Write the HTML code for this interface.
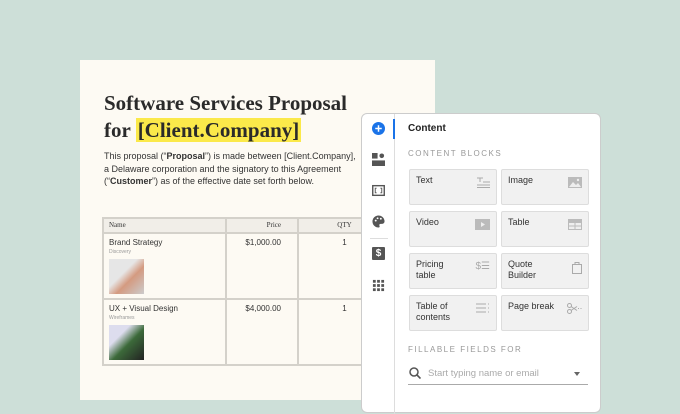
<!DOCTYPE html>
<html><head><style>
*{margin:0;padding:0;box-sizing:border-box}
body{width:680px;height:400px;background:#cddfd8;position:relative;overflow:hidden;font-family:"Liberation Sans",sans-serif}
.doc{position:absolute;left:80px;top:60px;width:355px;height:340px;background:#fdfaf3}
h1{position:absolute;left:24px;top:30px;font-family:"Liberation Serif",serif;font-weight:bold;font-size:21px;line-height:27px;color:#2a2a2a;white-space:nowrap}
.hl{background:#fbe94a;padding:0 2px}
.p{position:absolute;left:24px;top:90px;font-size:9px;line-height:12.5px;color:#333;white-space:nowrap}
table{position:absolute;left:22px;top:157px;border-collapse:collapse;width:290px}
td,th{border:2px solid #d4d1ca;vertical-align:top}
th{background:#f1eee8;font-family:"Liberation Serif",serif;font-weight:normal;font-size:7px;height:15px;color:#333;padding:2px 5px}
td{height:66px;font-size:8px;color:#333;padding:4px 5px}
.sub{font-size:5px;color:#999;margin:2px 0 4px}
.img{width:35px;height:35px}
.panel{position:absolute;left:361px;top:113px;width:240px;height:300px;background:#fff;border:1px solid #ccc;border-radius:6px}
.side{position:absolute;left:0;top:0;width:33px;height:300px;border-right:1px solid #ddd}
.ic{position:absolute;left:10px;width:13px;height:13px}
.blk{position:absolute;width:88px;height:36px;background:#f1f1f1;border:1.5px solid #ddd;border-radius:2px;font-size:9px;color:#333;padding:5px 6px;line-height:11px}
.bi{position:absolute;right:6px;top:7px}
.lbl{position:absolute;left:46px;font-size:8px;letter-spacing:1.5px;color:#999}
</style></head><body>
<div class="doc">
<h1>Software Services Proposal<br>for <span class="hl">[Client.Company]</span></h1>
<div class="p">This proposal (“<b>Proposal</b>”) is made between [Client.Company],<br>a Delaware corporation and the signatory to this Agreement<br>(“<b>Customer</b>”) as of the effective date set forth below.</div>
<table>
<tr><th style="text-align:left;width:123px">Name</th><th style="text-align:right;width:72px;padding-right:16px">Price</th><th style="text-align:center">QTY</th></tr>
<tr><td>Brand Strategy<div class="sub">Discovery</div><div class="img" style="background:linear-gradient(135deg,#e6e6e6 40%,#d49a80 60%,#ccc)"></div></td><td style="text-align:right;padding-right:16px">$1,000.00</td><td style="text-align:center">1</td></tr>
<tr><td>UX + Visual Design<div class="sub">Wireframes</div><div class="img" style="background:linear-gradient(135deg,#dde 30%,#3c6a3a 55%,#222)"></div></td><td style="text-align:right;padding-right:16px">$4,000.00</td><td style="text-align:center">1</td></tr>
</table>
</div>
<div class="panel">
<div class="side">
<svg class="ic" style="top:8px" viewBox="0 0 14 14"><circle cx="7" cy="7" r="7" fill="#1a73e8"/><path d="M7 3.5v7M3.5 7h7" stroke="#fff" stroke-width="1.6"/></svg>
<div style="position:absolute;left:31px;top:5px;width:2px;height:20px;background:#1a73e8"></div>
<svg class="ic" style="top:39px" viewBox="0 0 14 14" fill="#555"><rect x="0" y="0" width="6" height="6"/><circle cx="10.5" cy="3" r="2.5"/><rect x="0" y="8" width="14" height="6"/></svg>
<svg class="ic" style="top:70px" viewBox="0 0 14 14"><rect x="0.8" y="1.8" width="12.4" height="10.4" fill="none" stroke="#555" stroke-width="1.5"/><path d="M5 4.5H3.5v5H5M9 4.5h1.5v5H9" fill="none" stroke="#555"/></svg>
<svg class="ic" style="top:101px" viewBox="0 0 14 14"><path d="M7 0.5a6.5 6.5 0 0 0 0 13c1.2 0 1.5-1 1-2s0-2 1.5-2H11a2.5 2.5 0 0 0 2.5-2.5A6.5 6.5 0 0 0 7 .5z" fill="#555"/><circle cx="4" cy="6" r="1" fill="#fff"/><circle cx="6" cy="3.5" r="1" fill="#fff"/><circle cx="9.5" cy="4" r="1" fill="#fff"/></svg>
<div style="position:absolute;left:8px;top:124px;width:18px;height:1px;background:#ddd"></div>
<div class="ic" style="top:133px;background:#555;color:#fff;font-size:10px;font-weight:bold;text-align:center;line-height:13px;border-radius:1px">$</div>
<svg class="ic" style="top:165px" viewBox="0 0 14 14" fill="#555"><rect x="1" y="1" width="3" height="3"/><rect x="5.5" y="1" width="3" height="3"/><rect x="10" y="1" width="3" height="3"/><rect x="1" y="5.5" width="3" height="3"/><rect x="5.5" y="5.5" width="3" height="3"/><rect x="10" y="5.5" width="3" height="3"/><rect x="1" y="10" width="3" height="3"/><rect x="5.5" y="10" width="3" height="3"/><rect x="10" y="10" width="3" height="3"/></svg>
</div>
<div style="position:absolute;left:46px;top:9px;font-size:10px;font-weight:bold;color:#222">Content</div>
<div class="lbl" style="top:35px">CONTENT BLOCKS</div>
<div class="blk" style="left:47px;top:55px">Text<svg class="bi" width="13" height="11" viewBox="0 0 13 11"><path d="M0 1h6M3 1v4M6 5h7M0 8h13M0 10.5h13" stroke="#aaa" stroke-width="1"/></svg></div>
<div class="blk" style="left:139px;top:55px">Image<svg class="bi" width="14" height="11" viewBox="0 0 14 11"><rect width="14" height="11" fill="#bbb"/><path d="M1 10l4-5 3 3 2-2 3 4z" fill="#eee"/><circle cx="10" cy="3" r="1.2" fill="#eee"/></svg></div>
<div class="blk" style="left:47px;top:97px">Video<svg class="bi" width="15" height="11" viewBox="0 0 15 11"><rect width="15" height="11" fill="#bbb"/><path d="M6 3l4 2.5L6 8z" fill="#eee"/></svg></div>
<div class="blk" style="left:139px;top:97px">Table<svg class="bi" width="14" height="11" viewBox="0 0 14 11"><rect width="14" height="11" fill="#bbb"/><path d="M1 4h5.5v2.5H1zM7.5 4H13v2.5H7.5zM1 7.5h5.5V10H1zM7.5 7.5H13V10H7.5z" fill="#eee"/></svg></div>
<div class="blk" style="left:47px;top:139px">Pricing<br>table<span class="bi" style="font-size:10px;color:#aaa">$☰</span></div>
<div class="blk" style="left:139px;top:139px">Quote<br>Builder<svg class="bi" width="10" height="13" viewBox="0 0 10 13"><rect x="0.5" y="3.5" width="9" height="9" fill="none" stroke="#aaa"/><path d="M3 3.5V1.5h4v2" fill="none" stroke="#aaa"/></svg></div>
<div class="blk" style="left:47px;top:181px">Table of<br>contents<svg class="bi" width="14" height="10" viewBox="0 0 14 10"><path d="M0 1h10M0 5h10M0 9h10M12 1h1M12 5h1M12 9h1" stroke="#aaa"/></svg></div>
<div class="blk" style="left:139px;top:181px">Page break<svg class="bi" width="15" height="11" viewBox="0 0 15 11"><circle cx="2.5" cy="2.5" r="2" fill="none" stroke="#aaa"/><circle cx="2.5" cy="8.5" r="2" fill="none" stroke="#aaa"/><path d="M4 3.5l6 4M4 7.5l6-4M11 5.5h1M13.5 5.5h1" stroke="#aaa"/></svg></div>
<div class="lbl" style="top:231px">FILLABLE FIELDS FOR</div>
<svg style="position:absolute;left:47px;top:253px" width="12" height="12" viewBox="0 0 12 12"><circle cx="5" cy="5" r="4" fill="none" stroke="#555" stroke-width="1.5"/><path d="M8 8l3.5 3.5" stroke="#555" stroke-width="1.6"/></svg>
<div style="position:absolute;left:66px;top:254px;font-size:9.5px;color:#aaa">Start typing name or email</div>
<div style="position:absolute;left:212px;top:258px;border:3.5px solid transparent;border-top:4px solid #666"></div>
<div style="position:absolute;left:46px;top:270px;width:180px;height:1px;background:#aaa"></div>
</div>
</body></html>
